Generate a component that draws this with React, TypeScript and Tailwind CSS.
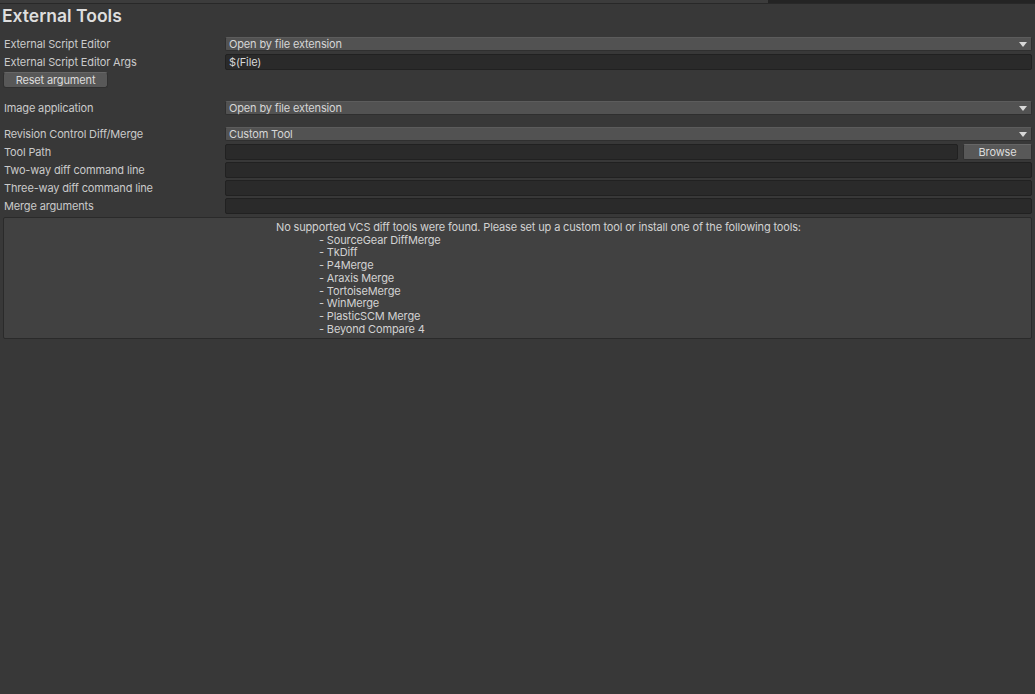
const Label = ({ text }: { text: string }) => (
    <div className="w-[225px] shrink-0 pl-[4px] text-[11px] tracking-[-0.15px] leading-none text-[#cacaca] whitespace-nowrap">{text}</div>
);

const Dropdown = ({ value }: { value: string }) => (
    <div className="flex-1 h-[14px] rounded-[2px] bg-[#525252] border border-[#2f2f2f] border-t-[#5c5c5c] flex items-center pl-[3px] pr-[4px] text-[11px] tracking-[-0.15px] text-[#d6d6d6]">
        <span className="flex-1 leading-none">{value}</span>
        <svg width="8" height="5" viewBox="0 0 8 5">
            <path d="M0 0h8L4 5z" fill="#d8d8d8" />
        </svg>
    </div>
);

const TextField = ({ value = "" }: { value?: string }) => (
    <div className="flex-1 h-[16px] rounded-[2px] bg-[#2a2a2a] border border-[#212121] flex items-center pl-[3px] text-[11px] tracking-[-0.15px] text-[#d6d6d6] leading-none">
        {value}
    </div>
);

const Row = ({ label, children }: { label: string; children: React.ReactNode }) => (
    <div className="flex items-center pr-[3px] h-[18px]">
        <Label text={label} />
        <div className="flex-1 flex items-center gap-[5px]">{children}</div>
    </div>
);

const tools = [
    "SourceGear DiffMerge",
    "TkDiff",
    "P4Merge",
    "Araxis Merge",
    "TortoiseMerge",
    "WinMerge",
    "PlasticSCM Merge",
    "Beyond Compare 4",
];

export default function App() {
    return (
        <div className="w-[1035px] h-[694px] bg-[#383838] overflow-hidden" style={{ fontFamily: "Inter, 'Noto Sans', sans-serif" }}>
            {/* top strip */}
            <div className="flex h-[4px] border-b border-[#282828]">
                <div className="w-[768px] bg-[#3c3c3c]" />
                <div className="flex-1 bg-[#242424]" />
            </div>

            <div className="h-[24px] pl-[2px] flex items-center text-[17.5px] font-semibold text-[#dedede] leading-none">
                External Tools
            </div>

            <div className="mt-[7px]">
                <Row label="External Script Editor">
                    <Dropdown value="Open by file extension" />
                </Row>
                <Row label="External Script Editor Args">
                    <TextField value="$(File)" />
                </Row>
                <div className="pl-[3px] pt-[1px] h-[19px]">
                    <div className="w-[105px] h-[16px] rounded-[3px] bg-[#585858] border border-[#303030] border-t-[#666666] flex items-center justify-center text-[11px] tracking-[-0.15px] text-[#dcdcdc] leading-none">
                        Reset argument
                    </div>
                </div>

                <div className="h-[9px]" />
                <Row label="Image application">
                    <Dropdown value="Open by file extension" />
                </Row>

                <div className="h-[8px]" />
                <Row label="Revision Control Diff/Merge">
                    <Dropdown value="Custom Tool" />
                </Row>
                <Row label="Tool Path">
                    <TextField />
                    <div className="w-[69px] h-[16px] rounded-[2px] bg-[#585858] border border-[#303030] border-t-[#666666] flex items-center justify-center text-[11px] tracking-[-0.15px] text-[#dcdcdc] leading-none">
                        Browse
                    </div>
                </Row>
                <Row label="Two-way diff command line">
                    <TextField />
                </Row>
                <Row label="Three-way diff command line">
                    <TextField />
                </Row>
                <Row label="Merge arguments">
                    <TextField />
                </Row>

                <div className="mx-[3px] mt-[2px] h-[122px] rounded-[2px] bg-[#414141] border border-[#2a2a2a] pt-[3px] text-[11px] tracking-[-0.15px] text-[#d2d2d2] leading-[12.7px]">
                    <div className="pl-[272px] whitespace-nowrap">
                        No supported VCS diff tools were found. Please set up a custom tool or install one of the following tools:
                    </div>
                    {tools.map((t) => (
                        <div key={t} className="pl-[315px] whitespace-nowrap">- {t}</div>
                    ))}
                </div>
            </div>
        </div>
    );
}
